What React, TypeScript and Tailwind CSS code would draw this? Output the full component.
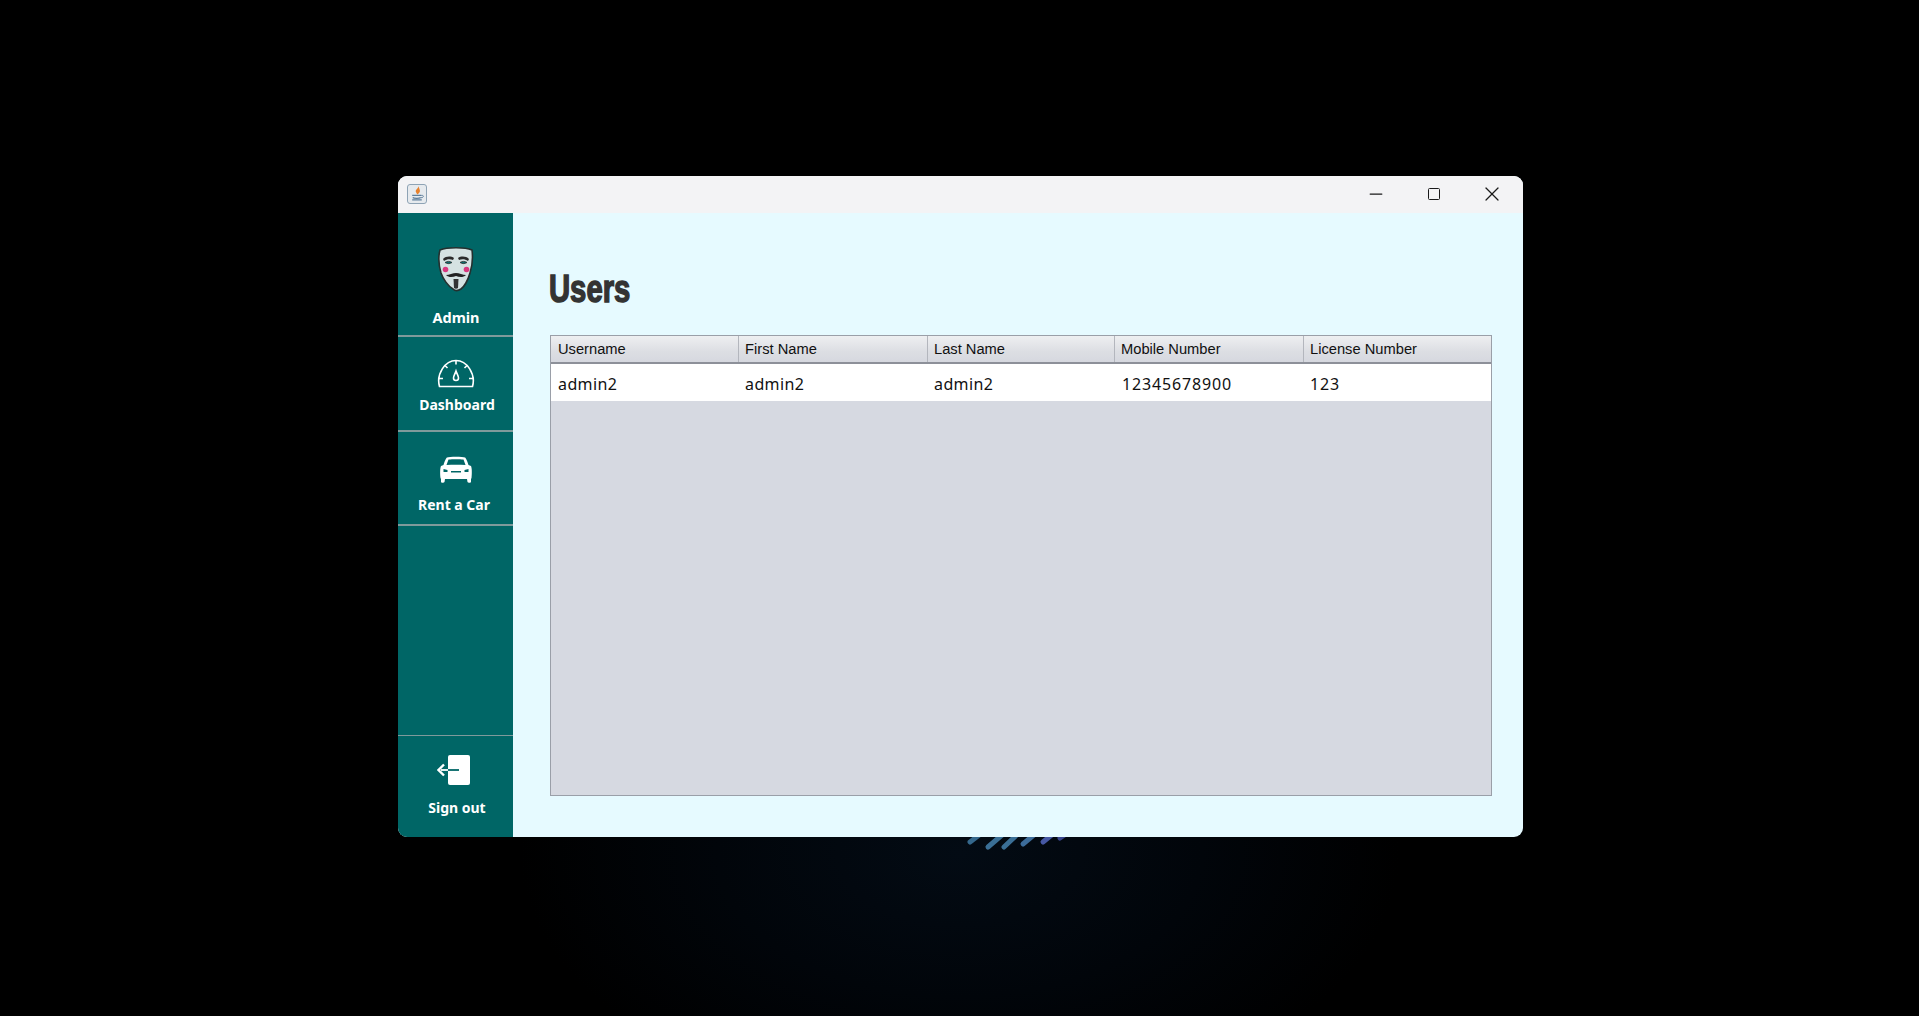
import { Minus, X } from "lucide-react";

const columns = [
  { label: "Username", value: "admin2", width: "w-[188px]", head: "pl-[7px]", cell: "pl-[7px] tracking-[0.4px]" },
  { label: "First Name", value: "admin2", width: "w-[189px]", head: "pl-[6px]", cell: "pl-[6px] tracking-[0.4px]" },
  { label: "Last Name", value: "admin2", width: "w-[187px]", head: "pl-[6px]", cell: "pl-[6px] tracking-[0.4px]" },
  { label: "Mobile Number", value: "12345678900", width: "w-[189px]", head: "pl-[6px]", cell: "pl-[7px] tracking-[0.85px]" },
  { label: "License Number", value: "123", width: "flex-1", head: "pl-[6px]", cell: "pl-[6px] tracking-[0.85px]" },
];

function JavaIcon() {
  return (
    <div className="w-[20px] h-[20px] rounded-[3px] border border-[#8ea3b5] bg-[#e6eaee] flex items-center justify-center">
      <svg width="17" height="17" viewBox="0 0 16 16" fill="none">
        <path d="M8.800.5c1 2.500-3.300 3.500-2.300 6 .4.900 1 1.500 1.200 2.500 2-1.500 3.300-3 2.300-4.800C9.400 3 9.300 1.800 8.800.5z" fill="#e8812c" />
        <path d="M3 9.800h8.500M3.500 11.800c1 1 6.500 1 7.500 0M3 14h9" stroke="#5f7f9c" strokeWidth="1.200" />
        <path d="M11.500 9.800c2.800-.5 2.800 2.200-.5 2.200" stroke="#5f7f9c" strokeWidth="0.900" />
      </svg>
    </div>
  );
}

function MaskIcon() {
  return (
    <svg width="38" height="46" viewBox="0 0 38 46">
      <path d="M3 4C10 1 28 1 35 4c1 8 0 17-2 23-2 7-6 14-9 16-3 2-6 2-8 0C11 40 6 33 4 27 2 20 1 11 3 4z" fill="#d5e2e2" stroke="#23302f" strokeWidth="1.600" />
      <path d="M6 13c3-3 8-3 11-1l-1 2c-3-1-6-1-9 1zM32 13c-3-3-8-3-11-1l1 2c3-1 6-1 9 1z" fill="#2b2b2b" />
      <path d="M8 16.500c2-1.500 5-1.500 7 0-2 1.500-5 1.500-7 0zM23 16.500c2-1.500 5-1.500 7 0-2 1.500-5 1.500-7 0z" fill="#0f6a6a" stroke="#222" strokeWidth="0.700" />
      <circle cx="8.500" cy="23.500" r="2.800" fill="#d9377e" />
      <circle cx="29.500" cy="23.500" r="2.800" fill="#d9377e" />
      <path d="M9 29c3 0 7-2 10-2s7 2 10 2c-3 3-7 2-10 1-3 1-7 2-10-1z" fill="#222" />
      <path d="M16.500 33h5l-.5 9c-1 1-3 1-4 0z" fill="#333" />
    </svg>
  );
}

function GaugeIcon() {
  return (
    <svg width="38" height="29" viewBox="0 0 38 29" fill="none" stroke="#fff" strokeWidth="1.600">
      <path d="M2.500 27.500C-1 15 8 1.500 19 1.500S39 15 35.500 27.500z" />
      <path d="M19 1.500v4M8 6.500l2.500 2.500M30 6.500L27.500 9M1.500 19.500h4.500M36.500 19.500H32" />
      <path d="M19 12c-1 3-2.500 5-2.500 7a2.500 2.500 0 0 0 5 0c0-2-1.500-4-2.500-7z" />
    </svg>
  );
}

function CarIcon() {
  return (
    <svg width="32" height="27" viewBox="0 0 32 27">
      <path fillRule="evenodd" fill="#fff" d="M7 1.500C9 .5 23 .5 25 1.500c1 .5 2.500 4 3.500 7.500L31 10c1 2 1 8 .5 12l-.5 1v3c0 1-3 1-3.500 0l-.5-3H5l-.5 3c-.5 1-3.500 1-3.500 0v-3l-.5-1C0 18 0 12 1 10l2.500-1C4.500 5.500 6 2 7 1.500zM8.500 3.500 6.500 9c6-.5 13-.5 19 0l-2-5.500c-4-.5-11-.5-15 0zM3.500 13v3h4v-2zM28.500 13v3h-4v-2zM11 15v1.500h10V15z" />
    </svg>
  );
}

function SignOutIcon() {
  return (
    <svg width="34" height="30" viewBox="0 0 34 30">
      <rect x="11" y="0" width="22" height="30" rx="2" fill="#fff" />
      <path d="M4 15h18" stroke="#006666" strokeWidth="1.800" />
      <path d="M4 15h7" stroke="#fff" strokeWidth="1.800" />
      <path d="M7 9.500 1.500 15 7 20.500" fill="none" stroke="#fff" strokeWidth="2.400" />
    </svg>
  );
}

export default function App() {
  return (
    <div className="relative w-screen h-screen overflow-hidden bg-[radial-gradient(ellipse_440px_260px_at_50%_84%,#030b14_0%,#01050a_55%,#000000_100%)] pt-[176px] pl-[398px]">
      {/* wallpaper bit showing under the window */}
      <svg className="absolute left-[965px] top-[825px]" width="110" height="30" viewBox="0 0 110 30" fill="none" strokeWidth="5" strokeLinecap="round">
        <path d="M5 17 22 4" stroke="#35688c" />
        <path d="M23 22 44 4" stroke="#3a6f96" />
        <path d="M39 22 58 4" stroke="#3a6f96" />
        <path d="M58 19 76 4" stroke="#3c6c9a" />
        <path d="M78 17 94 4" stroke="#4658a4" />
        <path d="M95 13 104 7" stroke="#38458c" />
      </svg>

      <div className="relative w-[1125px] h-[661px] rounded-[9px] overflow-hidden flex flex-col bg-[#e6faff]">
        {/* title bar */}
        <div className="h-[37px] shrink-0 bg-[#f3f3f5] flex items-center pl-[9px] pb-[2px]">
          <JavaIcon />
          <div className="ml-auto flex items-center pr-[2px] text-[#1a1a1a]">
            <div className="w-[58px] flex justify-center"><Minus size={20} strokeWidth={1.500} /></div>
            <div className="w-[58px] flex justify-center">
              <div className="w-[12px] h-[12px] mr-[1px] rounded-[1.500px] border-[1.300px] border-[#1a1a1a]" />
            </div>
            <div className="w-[58px] flex justify-center"><X size={24} strokeWidth={1.200} /></div>
          </div>
        </div>

        <div className="flex-1 flex min-h-0">
          {/* sidebar */}
          <aside className="w-[115px] shrink-0 bg-[#006666] flex flex-col text-white text-[14px] font-bold font-['Noto_Sans','Open_Sans',sans-serif]">
            <div className="h-[124px] shrink-0 border-b-2 border-[#7f9a9b] flex flex-col items-center pt-[33px]">
              <MaskIcon />
              <span className="mt-[15px] ml-[1px] text-[14.500px] leading-[20px]">Admin</span>
            </div>
            <div className="h-[95px] shrink-0 border-b-2 border-[#7f9a9b] flex flex-col items-center pt-[22px]">
              <div className="ml-[1px] flex"><GaugeIcon /></div>
              <span className="mt-[7px] ml-[3px] leading-[20px]">Dashboard</span>
            </div>
            <div className="h-[94px] shrink-0 border-b-2 border-[#7f9a9b] flex flex-col items-center pt-[24px]">
              <CarIcon />
              <span className="mt-[12px] mr-[3px] leading-[20px]">Rent a Car</span>
            </div>
            <div className="flex-1" />
            <div className="h-[102px] shrink-0 border-t border-[#7f9a9b] flex flex-col items-center pt-[19px]">
              <div className="mr-[3px] flex"><SignOutIcon /></div>
              <span className="mt-[13px] ml-[3px] leading-[20px]">Sign out</span>
            </div>
          </aside>

          {/* content */}
          <main className="flex-1 min-w-0 flex flex-col pl-[37px] pr-[31px] pt-[49px] pb-[41px]">
            <div className="h-[73px] shrink-0">
              <h1 className="inline-block origin-left scale-x-[0.75] -ml-[1px] mt-[3px] leading-[48px] text-[39px] font-bold text-[#333333] font-['Liberation_Sans',sans-serif] [-webkit-text-stroke:1.500px_#333333]">
                Users
              </h1>
            </div>
            <div className="flex-1 border border-[#9a9fa8] bg-[#d6d9e1] flex flex-col min-h-0">
              <div className="h-[28px] shrink-0 flex border-b-2 border-[#8d9099] bg-[linear-gradient(#eeeff1,#dcdee3_60%,#d6d8df)] text-[14.700px] text-[#111111] font-['Liberation_Sans',sans-serif]">
                {columns.map((c) => (
                  <div key={c.label} className={`${c.width} ${c.head} leading-[26px] border-r border-[#b3b6bd] last:border-r-0`}>
                    {c.label}
                  </div>
                ))}
              </div>
              <div className="h-[37px] shrink-0 flex bg-white text-[16px] text-[#111111] font-['Noto_Sans','Open_Sans',sans-serif]">
                {columns.map((c) => (
                  <div key={c.label} className={`${c.width} ${c.cell} leading-[40px]`}>
                    {c.value}
                  </div>
                ))}
              </div>
            </div>
          </main>
        </div>
      </div>
    </div>
  );
}
